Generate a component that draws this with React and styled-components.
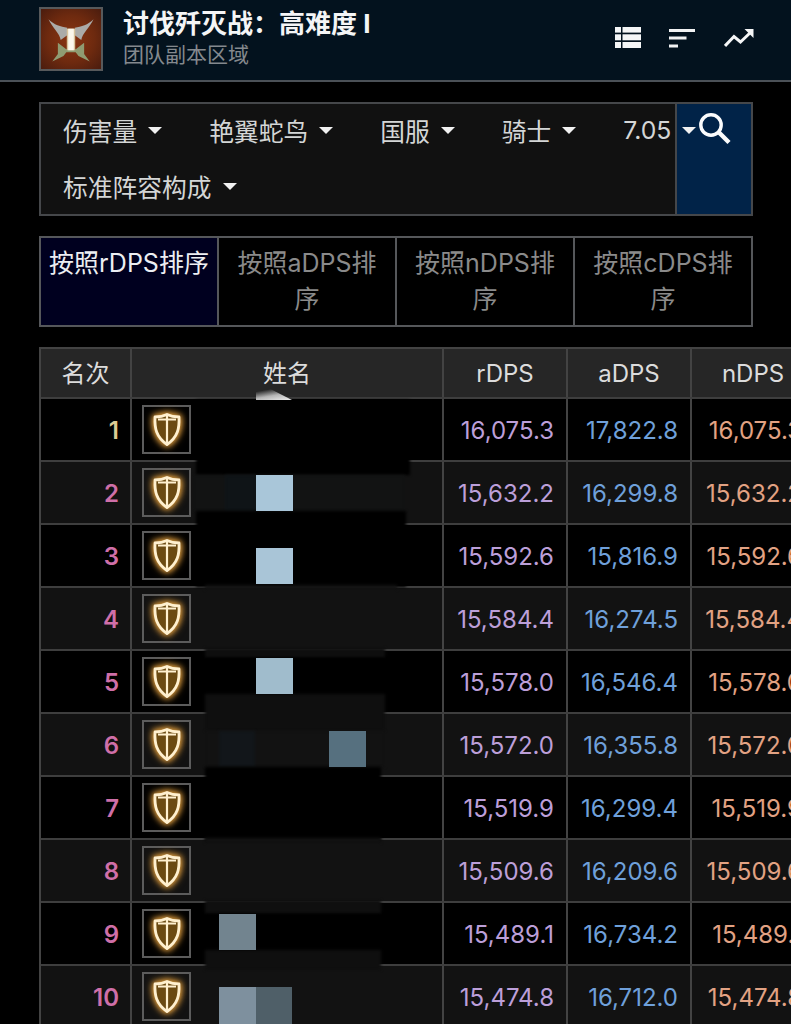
import React from "react";
import styled, { createGlobalStyle } from "styled-components";

const Global = createGlobalStyle`
  html, body { margin: 0; padding: 0; background: #000; overflow: hidden; }
  * { box-sizing: border-box; }
  body { font-family: Inter, "Noto Sans CJK SC", sans-serif; }
`;

const Page = styled.div`
  width: 791px;
  height: 1024px;
  overflow: hidden;
  background: #000;
  color: #e6e6e6;
`;

const Header = styled.header`
  display: flex;
  align-items: flex-start;
  height: 82px;
  padding: 7px 37px 0 39px;
  background: #03121e;
  border-bottom: 2px solid #4b5157;
`;

const ZoneIcon = styled.div`
  width: 64px;
  height: 64px;
  flex: none;
  border: 2px solid #57595b;
  background: radial-gradient(circle at 50% 50%, #8a3512 0%, #6e2a0f 55%, #4a1c0e 100%);
  svg { display: block; width: 100%; height: 100%; }
`;

const TitleBlock = styled.div`
  margin-left: 20px;
  display: flex;
  flex-direction: column;
`;

const Title = styled.div`
  font-size: 26px;
  line-height: 34px;
  font-weight: 700;
  color: #f4f5f6;
  white-space: nowrap;
`;

const Subtitle = styled.div`
  font-size: 21px;
  line-height: 28px;
  color: #84898e;
  white-space: nowrap;
`;

const HeaderIcons = styled.div`
  margin-left: auto;
  margin-top: 20px;
  display: flex;
  align-items: flex-start;
  gap: 28px;
`;

const Glyph = styled.svg`
  display: block;
  margin-top: ${(p) => p.$top || 0}px;
  margin-left: ${(p) => p.$left || 0}px;
`;

const FilterBar = styled.div`
  display: flex;
  width: 714px;
  height: 114px;
  margin: 20px 0 0 39px;
  border: 2px solid #45474a;
  background: #111;
`;

const FilterWrap = styled.div`
  flex: 1;
  min-width: 0;
  border-right: 2px solid #45474a;
  position: relative;
`;

const FilterItems = styled.div`
  display: flex;
  flex-wrap: wrap;
  width: 700px;
  padding-left: 22px;
  column-gap: 47px;
  position: relative;
  z-index: 1;
`;

const FilterItem = styled.div`
  display: flex;
  align-items: center;
  gap: 11px;
  height: 56px;
  padding-bottom: 4px;
  font-size: 24.75px;
  color: #d4d6d6;
  white-space: nowrap;
  flex-basis: ${(p) => (p.$break ? "100%" : "auto")};
`;

const Caret = styled.span`
  width: 0;
  height: 0;
  border-left: 7px solid transparent;
  border-right: 7px solid transparent;
  border-top: 7px solid #f1f1f1;
`;

const SearchButton = styled.div`
  flex: none;
  width: 74px;
  background: #012348;
  padding: 9px 0 0 21px;
`;

const Tabs = styled.div`
  display: grid;
  grid-template-columns: 178px 178px 178px 1fr;
  width: 714px;
  height: 91px;
  margin: 20px 0 0 39px;
  border: 2px solid #55575a;
`;

const Tab = styled.div`
  padding: 7px 7px 0;
  font-size: 25px;
  line-height: 36px;
  text-align: center;
  color: ${(p) => (p.$active ? "#eceef2" : "#8a8a8a")};
  background: ${(p) => (p.$active ? "#00001f" : "#000")};
  border-right: ${(p) => (p.$last ? "0" : "2px solid #55575a")};
`;

const TableClip = styled.div`
  position: relative;
  width: 752px;
  margin: 20px 0 0 39px;
  overflow: hidden;
`;

const Table = styled.div`
  width: 777px;
  border: solid #434343;
  border-width: 2px 0 0 2px;
`;

const Row = styled.div`
  display: grid;
  grid-template-columns: 91px 312px 124px 124px 124px;
  height: ${(p) => (p.$head ? "50px" : "63px")};
  background: ${(p) => (p.$head ? "#262626" : p.$alt ? "#121212" : "#000")};
  border-bottom: 2px solid #3e3e3e;
`;

const HeadCell = styled.div`
  display: flex;
  align-items: center;
  justify-content: center;
  padding-bottom: ${(p) => (p.$cjk ? "3px" : "0")};
  font-size: 24px;
  color: #dcdcdc;
  border-right: 2px solid #434343;
`;

const RankCell = styled.div`
  display: flex;
  align-items: center;
  justify-content: flex-end;
  padding: 2px 11px 0 0;
  font-size: 24px;
  font-weight: 600;
  color: ${(p) => (p.$first ? "#dcca93" : "#cf6fa8")};
  border-right: 2px solid #434343;
`;

const NameCell = styled.div`
  display: flex;
  align-items: center;
  padding-left: 10px;
  border-right: 2px solid #434343;
`;

const JobBox = styled.div`
  width: 49px;
  height: 49px;
  margin-top: -1px;
  border: 2px solid #5c5c5c;
  display: flex;
  align-items: center;
  justify-content: center;
  svg {
    display: block;
    overflow: visible;
    filter: drop-shadow(0 0 3px #e8a848) drop-shadow(0 0 3px #b87c28);
  }
`;

const ValueCell = styled.div`
  display: flex;
  align-items: center;
  justify-content: flex-end;
  padding: 2px 12px 0 0;
  font-size: 24px;
  font-weight: 400;
  white-space: nowrap;
  color: ${(p) => p.$color};
  border-right: 2px solid #434343;
`;

const Mask = styled.div`
  position: absolute;
  left: ${(p) => p.$x - 39}px;
  top: ${(p) => p.$y - 347}px;
  width: ${(p) => p.$w}px;
  height: ${(p) => p.$h}px;
  background: ${(p) => p.$c};
  filter: ${(p) => (p.$soft ? "blur(1.5px)" : "none")};
`;

const Smear = styled(Mask)`
  background: linear-gradient(170deg, #262626 15%, #b5b5b5 55%, #f0f0f0 100%);
  clip-path: polygon(0 0, 40% 0, 100% 100%, 0 100%);
`;

const ShieldIcon = () => (
  <svg width="28" height="33" viewBox="0 0 28 33" fill="none">
    <path d="M2 4 C6 4 10 3.5 14 1.5 C18 3.5 22 4 26 4 C26.5 15 25 24 14 31.5 C3 24 1.5 15 2 4 Z" fill="#6b4a12" stroke="#fff0cf" strokeWidth="2.8" strokeLinejoin="round" />
    <path d="M14 2 V31 M5 6.5 H23" stroke="#fff0cf" strokeWidth="2.2" />
  </svg>
);

const ZoneGlyph = () => (
  <svg viewBox="0 0 64 64">
    <path d="M8 11 C14 17 21 19 28 20 L28 28 L21 33 C20 26 12 20 8 11 Z" fill="#ababa8" />
    <path d="M56 11 C50 17 43 19 36 20 L36 28 L43 33 C44 26 52 20 56 11 Z" fill="#ababa8" />
    <path d="M12 56 L18 48 L18 36 L27 43 L37 43 L46 36 L46 48 L52 56 L40 50 L37 46 L27 46 L24 50 Z" fill="#8f9c72" />
    <rect x="27.5" y="21" width="9" height="23" fill="#d8c49c" />
    <rect x="29" y="21" width="6" height="23" fill="#fbf7ec" />
  </svg>
);

const ListIcon = () => (
  <Glyph width="26" height="21" viewBox="0 0 26 21" fill="#f5f6f7">
    <rect x="0" y="0" width="6" height="5.6" />
    <rect x="7.5" y="0" width="18.5" height="5.6" />
    <rect x="0" y="7.3" width="6" height="6" />
    <rect x="7.5" y="7.3" width="18.5" height="6" />
    <rect x="0" y="15" width="6" height="6" />
    <rect x="7.5" y="15" width="18.5" height="6" />
  </Glyph>
);

const SortIcon = () => (
  <Glyph width="26" height="19" viewBox="0 0 26 19" fill="#f1f2f3" $top={2}>
    <rect x="0" y="0" width="26" height="3" />
    <rect x="0" y="7.5" width="17.5" height="3" />
    <rect x="0" y="15.5" width="9" height="3" />
  </Glyph>
);

const TrendIcon = () => (
  <Glyph width="30" height="20" viewBox="0 0 30 20" fill="none" stroke="#f5f6f7" strokeWidth="3" $top={1} $left={1}>
    <path d="M1 18 L10 8.5 L16.5 14 L27 4" />
    <path d="M20.5 1 L29.5 1 L29.5 10 Z" fill="#f5f6f7" stroke="none" />
  </Glyph>
);

const SearchIcon = () => (
  <Glyph width="34" height="32" viewBox="0 0 34 32" fill="none" stroke="#fbfcfd">
    <circle cx="13" cy="12" r="10.2" strokeWidth="3.4" />
    <path d="M21 19.5 L31 29.5" strokeWidth="4.4" />
  </Glyph>
);

const filters = ["伤害量", "艳翼蛇鸟", "国服", "骑士", "7.05", "标准阵容构成"];
const tabs = ["按照rDPS排序", "按照aDPS排序", "按照nDPS排序", "按照cDPS排序"];
const rows = [
  ["16,075.3", "17,822.8", "16,075.3"],
  ["15,632.2", "16,299.8", "15,632.2"],
  ["15,592.6", "15,816.9", "15,592.6"],
  ["15,584.4", "16,274.5", "15,584.4"],
  ["15,578.0", "16,546.4", "15,578.0"],
  ["15,572.0", "16,355.8", "15,572.0"],
  ["15,519.9", "16,299.4", "15,519.9"],
  ["15,509.6", "16,209.6", "15,509.6"],
  ["15,489.1", "16,734.2", "15,489.1"],
  ["15,474.8", "16,712.0", "15,474.8"],
];

const masks = [
  { x: 196, y: 400, w: 214, h: 75, c: "#000", s: 1 },
  { x: 193, y: 475, w: 212, h: 36, c: "#121313", s: 1 },
  { x: 225, y: 475, w: 31, h: 36, c: "#0f1417", s: 1 },
  { x: 196, y: 511, w: 210, h: 76, c: "#000", s: 1 },
  { x: 205, y: 585, w: 192, h: 5, c: "#121212", s: 1 },
  { x: 205, y: 648, w: 180, h: 10, c: "#0e0e0e", s: 1 },
  { x: 205, y: 658, w: 180, h: 36, c: "#000", s: 1 },
  { x: 205, y: 694, w: 180, h: 37, c: "#0f0f0f", s: 1 },
  { x: 205, y: 731, w: 180, h: 36, c: "#121212", s: 1 },
  { x: 219, y: 731, w: 36, h: 36, c: "#12161a", s: 1 },
  { x: 205, y: 767, w: 176, h: 74, c: "#000", s: 1 },
  { x: 205, y: 838, w: 176, h: 5, c: "#121212", s: 1 },
  { x: 205, y: 900, w: 176, h: 14, c: "#0f0f0f", s: 1 },
  { x: 205, y: 914, w: 176, h: 36, c: "#000", s: 1 },
  { x: 205, y: 950, w: 176, h: 20, c: "#0f0f0f", s: 1 },
  { x: 256, y: 475, w: 36.5, h: 36, c: "#a9c6d9" },
  { x: 256, y: 548, w: 36.5, h: 36, c: "#a9c5d7" },
  { x: 256, y: 658, w: 36.5, h: 36, c: "#a0bccc" },
  { x: 329, y: 731, w: 36.5, h: 36, c: "#56707f" },
  { x: 219, y: 914, w: 36.5, h: 36, c: "#72848f" },
  { x: 219, y: 987, w: 36.5, h: 37, c: "#7e909e" },
  { x: 255.5, y: 987, w: 36.5, h: 37, c: "#4f5f68" },
];

export default function App() {
  return (
    <Page>
      <Global />
      <Header>
        <ZoneIcon><ZoneGlyph /></ZoneIcon>
        <TitleBlock>
          <Title>{"讨伐歼灭战\uFF1A高难度 I"}</Title>
          <Subtitle>团队副本区域</Subtitle>
        </TitleBlock>
        <HeaderIcons>
          <ListIcon />
          <SortIcon />
          <TrendIcon />
        </HeaderIcons>
      </Header>

      <FilterBar>
        <FilterWrap>
          <FilterItems>
            {filters.map((f, i) => (
              <FilterItem key={f} $break={i === 5}>
                {f}
                <Caret />
              </FilterItem>
            ))}
          </FilterItems>
        </FilterWrap>
        <SearchButton><SearchIcon /></SearchButton>
      </FilterBar>

      <Tabs>
        {tabs.map((t, i) => (
          <Tab key={t} $active={i === 0} $last={i === 3}>{t}</Tab>
        ))}
      </Tabs>

      <TableClip>
        <Table>
          <Row $head>
            <HeadCell $cjk>名次</HeadCell>
            <HeadCell $cjk>姓名</HeadCell>
            <HeadCell>rDPS</HeadCell>
            <HeadCell>aDPS</HeadCell>
            <HeadCell>nDPS</HeadCell>
          </Row>
          {rows.map((r, i) => (
            <Row key={i} $alt={i % 2 === 1}>
              <RankCell $first={i === 0}>{i + 1}</RankCell>
              <NameCell>
                <JobBox><ShieldIcon /></JobBox>
              </NameCell>
              <ValueCell $color="#bc9fd9">{r[0]}</ValueCell>
              <ValueCell $color="#6fa0da">{r[1]}</ValueCell>
              <ValueCell $color="#e2a283">{r[2]}</ValueCell>
            </Row>
          ))}
        </Table>
        {masks.map((m, i) => (
          <Mask key={i} $x={m.x} $y={m.y} $w={m.w} $h={m.h} $c={m.c} $soft={m.s} />
        ))}
        <Smear $x={256} $y={389} $w={36} $h={11} />
      </TableClip>
    </Page>
  );
}
